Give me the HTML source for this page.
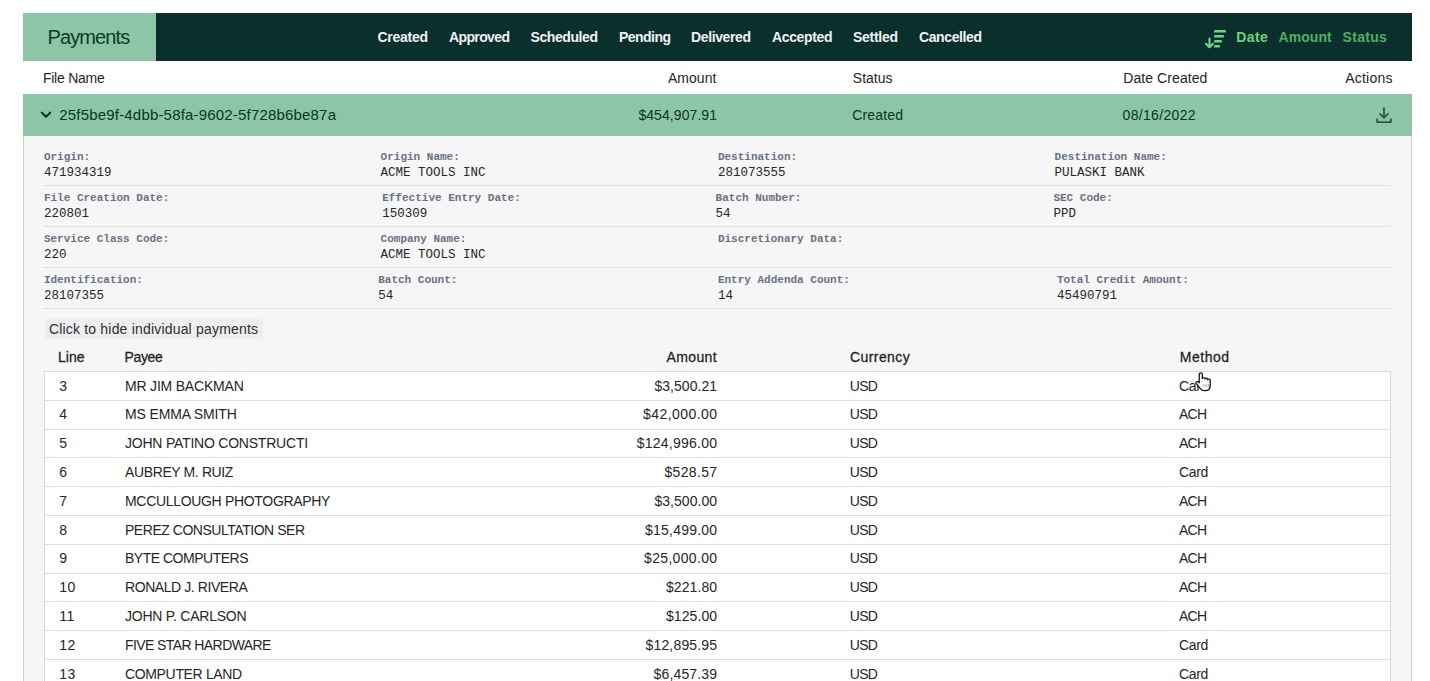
<!DOCTYPE html>
<html><head><meta charset="utf-8">
<style>
html,body{margin:0;padding:0;background:#fff;}
body{width:1430px;height:681px;overflow:hidden;position:relative;font-family:"Liberation Sans",sans-serif;}
.t{position:absolute;white-space:pre;}
.r{position:absolute;}
</style></head><body>
<div class="r" style="left:23px;top:13px;width:1389px;height:48px;background:#0b2f2d;"></div>
<div class="r" style="left:23px;top:13px;width:133px;height:48px;background:#8dc6a7;"></div>
<div class="t" style="left:47.60px;top:25.80px;font-size:20px;line-height:22px;font-family:'Liberation Sans', sans-serif;font-weight:400;color:#0a3b24;letter-spacing:-0.907px;">Payments</div>
<div class="t" style="left:377.50px;top:29.40px;font-size:14px;line-height:16px;font-family:'Liberation Sans', sans-serif;font-weight:700;color:#eef3f2;letter-spacing:-0.258px;">Created</div>
<div class="t" style="left:449.00px;top:29.40px;font-size:14px;line-height:16px;font-family:'Liberation Sans', sans-serif;font-weight:700;color:#eef3f2;letter-spacing:-0.621px;">Approved</div>
<div class="t" style="left:530.50px;top:29.40px;font-size:14px;line-height:16px;font-family:'Liberation Sans', sans-serif;font-weight:700;color:#eef3f2;letter-spacing:-0.412px;">Scheduled</div>
<div class="t" style="left:619.00px;top:29.40px;font-size:14px;line-height:16px;font-family:'Liberation Sans', sans-serif;font-weight:700;color:#eef3f2;letter-spacing:-0.533px;">Pending</div>
<div class="t" style="left:691.00px;top:29.40px;font-size:14px;line-height:16px;font-family:'Liberation Sans', sans-serif;font-weight:700;color:#eef3f2;letter-spacing:-0.381px;">Delivered</div>
<div class="t" style="left:772.00px;top:29.40px;font-size:14px;line-height:16px;font-family:'Liberation Sans', sans-serif;font-weight:700;color:#eef3f2;letter-spacing:-0.357px;">Accepted</div>
<div class="t" style="left:853.00px;top:29.40px;font-size:14px;line-height:16px;font-family:'Liberation Sans', sans-serif;font-weight:700;color:#eef3f2;letter-spacing:-0.283px;">Settled</div>
<div class="t" style="left:919.00px;top:29.40px;font-size:14px;line-height:16px;font-family:'Liberation Sans', sans-serif;font-weight:700;color:#eef3f2;letter-spacing:-0.394px;">Cancelled</div>
<svg class="r" style="left:1203px;top:27px" width="26" height="24" viewBox="0 0 26 24">
<g fill="#6fd47e">
<rect x="11" y="3" width="12" height="2.6" rx="1.2"/>
<rect x="11" y="8" width="10" height="2.6" rx="1.2"/>
<rect x="11" y="13" width="8" height="2.6" rx="1.2"/>
<rect x="11" y="18" width="6" height="2.6" rx="1.2"/>
</g>
<path d="M6.5 11.5 V20 M3 16.8 L6.5 20.2 L10 16.8" stroke="#6fd47e" stroke-width="2.2" fill="none" stroke-linecap="round" stroke-linejoin="round"/>
</svg>
<div class="t" style="left:1236.30px;top:29.30px;font-size:14px;line-height:16px;font-family:'Liberation Sans', sans-serif;font-weight:700;color:#6bd47b;letter-spacing:0.350px;">Date</div>
<div class="t" style="left:1278.50px;top:29.30px;font-size:14px;line-height:16px;font-family:'Liberation Sans', sans-serif;font-weight:700;color:#50ae60;letter-spacing:0.080px;">Amount</div>
<div class="t" style="left:1342.60px;top:29.30px;font-size:14px;line-height:16px;font-family:'Liberation Sans', sans-serif;font-weight:700;color:#50ae60;letter-spacing:0.300px;">Status</div>
<div class="t" style="left:42.90px;top:70.30px;font-size:14px;line-height:16px;font-family:'Liberation Sans', sans-serif;font-weight:400;color:#262626;letter-spacing:-0.237px;">File Name</div>
<div class="t" style="left:667.90px;top:70.30px;font-size:14px;line-height:16px;font-family:'Liberation Sans', sans-serif;font-weight:400;color:#262626;letter-spacing:0.050px;">Amount</div>
<div class="t" style="left:852.80px;top:70.30px;font-size:14px;line-height:16px;font-family:'Liberation Sans', sans-serif;font-weight:400;color:#262626;">Status</div>
<div class="t" style="left:1123.20px;top:70.30px;font-size:14px;line-height:16px;font-family:'Liberation Sans', sans-serif;font-weight:400;color:#262626;letter-spacing:0.086px;">Date Created</div>
<div class="t" style="left:1345.30px;top:70.30px;font-size:14px;line-height:16px;font-family:'Liberation Sans', sans-serif;font-weight:400;color:#262626;letter-spacing:0.200px;">Actions</div>
<div class="r" style="left:23px;top:135px;width:1389px;height:546px;background:#f6f6f6;border-left:1px solid #c0d9cc;border-right:1px solid #c0d9cc;box-sizing:border-box;"></div>
<div class="r" style="left:23px;top:94px;width:1389px;height:41.5px;background:#8dc6a7;"></div>
<svg class="r" style="left:39px;top:109px" width="14" height="11" viewBox="0 0 14 11">
<path d="M2.8 3.6 L7 7.8 L11.2 3.6" stroke="#0b2a1e" stroke-width="2" fill="none" stroke-linecap="round" stroke-linejoin="round"/>
</svg>
<div class="t" style="left:59.30px;top:106.20px;font-size:15px;line-height:17px;font-family:'Liberation Sans', sans-serif;font-weight:400;color:#083620;letter-spacing:0.184px;">25f5be9f-4dbb-58fa-9602-5f728b6be87a</div>
<div class="t" style="left:638.40px;top:107.20px;font-size:14px;line-height:16px;font-family:'Liberation Sans', sans-serif;font-weight:400;color:#083620;letter-spacing:0.075px;">$454,907.91</div>
<div class="t" style="left:852.30px;top:107.20px;font-size:14px;line-height:16px;font-family:'Liberation Sans', sans-serif;font-weight:400;color:#083620;letter-spacing:0.150px;">Created</div>
<div class="t" style="left:1122.60px;top:107.20px;font-size:14px;line-height:16px;font-family:'Liberation Sans', sans-serif;font-weight:400;color:#083620;letter-spacing:0.317px;">08/16/2022</div>
<svg class="r" style="left:1374px;top:105px" width="20" height="20" viewBox="0 0 20 20">
<path d="M10 3.2 V12.6 M6 8.8 L10 12.8 L14 8.8 M3.2 14.2 V17.1 H16.8 V14.2" stroke="#2a5843" stroke-width="1.85" fill="none" stroke-linecap="round" stroke-linejoin="round"/>
</svg>
<div class="t" style="left:43.90px;top:151.20px;font-size:11px;line-height:12px;font-family:'Liberation Mono', monospace;font-weight:700;color:#687283;">Origin:</div>
<div class="t" style="left:43.90px;top:165.80px;font-size:12.5px;line-height:14px;font-family:'Liberation Mono', monospace;font-weight:400;color:#262626;">471934319</div>
<div class="t" style="left:380.60px;top:151.20px;font-size:11px;line-height:12px;font-family:'Liberation Mono', monospace;font-weight:700;color:#687283;">Origin Name:</div>
<div class="t" style="left:380.60px;top:165.80px;font-size:12.5px;line-height:14px;font-family:'Liberation Mono', monospace;font-weight:400;color:#262626;">ACME TOOLS INC</div>
<div class="t" style="left:717.90px;top:151.20px;font-size:11px;line-height:12px;font-family:'Liberation Mono', monospace;font-weight:700;color:#687283;">Destination:</div>
<div class="t" style="left:717.90px;top:165.80px;font-size:12.5px;line-height:14px;font-family:'Liberation Mono', monospace;font-weight:400;color:#262626;">281073555</div>
<div class="t" style="left:1054.60px;top:151.20px;font-size:11px;line-height:12px;font-family:'Liberation Mono', monospace;font-weight:700;color:#687283;">Destination Name:</div>
<div class="t" style="left:1054.60px;top:165.80px;font-size:12.5px;line-height:14px;font-family:'Liberation Mono', monospace;font-weight:400;color:#262626;">PULASKI BANK</div>
<div class="r" style="left:43px;top:185px;width:1348px;height:1px;background:#e2e2e2;"></div>
<div class="t" style="left:43.90px;top:192.20px;font-size:11px;line-height:12px;font-family:'Liberation Mono', monospace;font-weight:700;color:#687283;">File Creation Date:</div>
<div class="t" style="left:43.90px;top:206.80px;font-size:12.5px;line-height:14px;font-family:'Liberation Mono', monospace;font-weight:400;color:#262626;">220801</div>
<div class="t" style="left:382.20px;top:192.20px;font-size:11px;line-height:12px;font-family:'Liberation Mono', monospace;font-weight:700;color:#687283;">Effective Entry Date:</div>
<div class="t" style="left:382.20px;top:206.80px;font-size:12.5px;line-height:14px;font-family:'Liberation Mono', monospace;font-weight:400;color:#262626;">150309</div>
<div class="t" style="left:715.60px;top:192.20px;font-size:11px;line-height:12px;font-family:'Liberation Mono', monospace;font-weight:700;color:#687283;">Batch Number:</div>
<div class="t" style="left:715.60px;top:206.80px;font-size:12.5px;line-height:14px;font-family:'Liberation Mono', monospace;font-weight:400;color:#262626;">54</div>
<div class="t" style="left:1053.40px;top:192.20px;font-size:11px;line-height:12px;font-family:'Liberation Mono', monospace;font-weight:700;color:#687283;">SEC Code:</div>
<div class="t" style="left:1053.40px;top:206.80px;font-size:12.5px;line-height:14px;font-family:'Liberation Mono', monospace;font-weight:400;color:#262626;">PPD</div>
<div class="r" style="left:43px;top:226px;width:1348px;height:1px;background:#e2e2e2;"></div>
<div class="t" style="left:43.90px;top:233.20px;font-size:11px;line-height:12px;font-family:'Liberation Mono', monospace;font-weight:700;color:#687283;">Service Class Code:</div>
<div class="t" style="left:43.90px;top:247.80px;font-size:12.5px;line-height:14px;font-family:'Liberation Mono', monospace;font-weight:400;color:#262626;">220</div>
<div class="t" style="left:380.60px;top:233.20px;font-size:11px;line-height:12px;font-family:'Liberation Mono', monospace;font-weight:700;color:#687283;">Company Name:</div>
<div class="t" style="left:380.60px;top:247.80px;font-size:12.5px;line-height:14px;font-family:'Liberation Mono', monospace;font-weight:400;color:#262626;">ACME TOOLS INC</div>
<div class="t" style="left:717.90px;top:233.20px;font-size:11px;line-height:12px;font-family:'Liberation Mono', monospace;font-weight:700;color:#687283;">Discretionary Data:</div>
<div class="r" style="left:43px;top:267px;width:1348px;height:1px;background:#e2e2e2;"></div>
<div class="t" style="left:43.90px;top:274.20px;font-size:11px;line-height:12px;font-family:'Liberation Mono', monospace;font-weight:700;color:#687283;">Identification:</div>
<div class="t" style="left:43.90px;top:288.80px;font-size:12.5px;line-height:14px;font-family:'Liberation Mono', monospace;font-weight:400;color:#262626;">28107355</div>
<div class="t" style="left:378.20px;top:274.20px;font-size:11px;line-height:12px;font-family:'Liberation Mono', monospace;font-weight:700;color:#687283;">Batch Count:</div>
<div class="t" style="left:378.20px;top:288.80px;font-size:12.5px;line-height:14px;font-family:'Liberation Mono', monospace;font-weight:400;color:#262626;">54</div>
<div class="t" style="left:717.90px;top:274.20px;font-size:11px;line-height:12px;font-family:'Liberation Mono', monospace;font-weight:700;color:#687283;">Entry Addenda Count:</div>
<div class="t" style="left:717.90px;top:288.80px;font-size:12.5px;line-height:14px;font-family:'Liberation Mono', monospace;font-weight:400;color:#262626;">14</div>
<div class="t" style="left:1056.90px;top:274.20px;font-size:11px;line-height:12px;font-family:'Liberation Mono', monospace;font-weight:700;color:#687283;">Total Credit Amount:</div>
<div class="t" style="left:1056.90px;top:288.80px;font-size:12.5px;line-height:14px;font-family:'Liberation Mono', monospace;font-weight:400;color:#262626;">45490791</div>
<div class="r" style="left:43px;top:308px;width:1348px;height:1px;background:#e2e2e2;"></div>
<div class="r" style="left:45px;top:318.5px;width:217.5px;height:20.0px;background:#eeeeee;border-radius:3px;"></div>
<div class="t" style="left:48.90px;top:321.20px;font-size:14px;line-height:16px;font-family:'Liberation Sans', sans-serif;font-weight:400;color:#2e2e2e;letter-spacing:0.188px;">Click to hide individual payments</div>
<div class="t" style="left:58.00px;top:349.20px;font-size:14px;line-height:16px;font-family:'Liberation Sans', sans-serif;font-weight:400;color:#1f1f1f;letter-spacing:0.017px;-webkit-text-stroke:0.28px #1f1f1f;">Line</div>
<div class="t" style="left:124.40px;top:349.20px;font-size:14px;line-height:16px;font-family:'Liberation Sans', sans-serif;font-weight:400;color:#1f1f1f;letter-spacing:-0.300px;-webkit-text-stroke:0.28px #1f1f1f;">Payee</div>
<div class="t" style="left:666.50px;top:349.20px;font-size:14px;line-height:16px;font-family:'Liberation Sans', sans-serif;font-weight:400;color:#1f1f1f;letter-spacing:0.370px;-webkit-text-stroke:0.28px #1f1f1f;">Amount</div>
<div class="t" style="left:850.00px;top:349.20px;font-size:14px;line-height:16px;font-family:'Liberation Sans', sans-serif;font-weight:400;color:#1f1f1f;letter-spacing:0.414px;-webkit-text-stroke:0.28px #1f1f1f;">Currency</div>
<div class="t" style="left:1179.80px;top:349.20px;font-size:14px;line-height:16px;font-family:'Liberation Sans', sans-serif;font-weight:400;color:#1f1f1f;letter-spacing:0.500px;-webkit-text-stroke:0.28px #1f1f1f;">Method</div>
<div class="r" style="left:44px;top:371px;width:1347px;height:329px;background:#ffffff;border:1px solid #d9dadd;box-sizing:border-box;"></div>
<div class="r" style="left:44px;top:399.8px;width:1347px;height:1.0px;background:#dcdee1;"></div>
<div class="t" style="left:59.20px;top:377.60px;font-size:14px;line-height:16px;font-family:'Liberation Sans', sans-serif;font-weight:400;color:#262626;">3</div>
<div class="t" style="left:125.00px;top:377.60px;font-size:14px;line-height:16px;font-family:'Liberation Sans', sans-serif;font-weight:400;color:#262626;letter-spacing:-0.196px;">MR JIM BACKMAN</div>
<div class="t" style="left:654.40px;top:377.60px;font-size:14px;line-height:16px;font-family:'Liberation Sans', sans-serif;font-weight:400;color:#262626;letter-spacing:0.050px;">$3,500.21</div>
<div class="t" style="left:849.80px;top:377.60px;font-size:14px;line-height:16px;font-family:'Liberation Sans', sans-serif;font-weight:400;color:#262626;letter-spacing:-0.775px;">USD</div>
<div class="t" style="left:1179.00px;top:377.60px;font-size:14px;line-height:16px;font-family:'Liberation Sans', sans-serif;font-weight:400;color:#262626;letter-spacing:-0.317px;">Card</div>
<div class="r" style="left:44px;top:428.6px;width:1347px;height:1.0px;background:#dcdee1;"></div>
<div class="t" style="left:59.20px;top:406.40px;font-size:14px;line-height:16px;font-family:'Liberation Sans', sans-serif;font-weight:400;color:#262626;">4</div>
<div class="t" style="left:125.00px;top:406.40px;font-size:14px;line-height:16px;font-family:'Liberation Sans', sans-serif;font-weight:400;color:#262626;letter-spacing:-0.146px;">MS EMMA SMITH</div>
<div class="t" style="left:642.90px;top:406.40px;font-size:14px;line-height:16px;font-family:'Liberation Sans', sans-serif;font-weight:400;color:#262626;letter-spacing:0.461px;">$42,000.00</div>
<div class="t" style="left:849.80px;top:406.40px;font-size:14px;line-height:16px;font-family:'Liberation Sans', sans-serif;font-weight:400;color:#262626;letter-spacing:-0.775px;">USD</div>
<div class="t" style="left:1179.00px;top:406.40px;font-size:14px;line-height:16px;font-family:'Liberation Sans', sans-serif;font-weight:400;color:#262626;letter-spacing:-0.775px;">ACH</div>
<div class="r" style="left:44px;top:457.4px;width:1347px;height:1.0px;background:#dcdee1;"></div>
<div class="t" style="left:59.20px;top:435.20px;font-size:14px;line-height:16px;font-family:'Liberation Sans', sans-serif;font-weight:400;color:#262626;">5</div>
<div class="t" style="left:125.00px;top:435.20px;font-size:14px;line-height:16px;font-family:'Liberation Sans', sans-serif;font-weight:400;color:#262626;letter-spacing:-0.219px;">JOHN PATINO CONSTRUCTI</div>
<div class="t" style="left:636.70px;top:435.20px;font-size:14px;line-height:16px;font-family:'Liberation Sans', sans-serif;font-weight:400;color:#262626;letter-spacing:0.255px;">$124,996.00</div>
<div class="t" style="left:849.80px;top:435.20px;font-size:14px;line-height:16px;font-family:'Liberation Sans', sans-serif;font-weight:400;color:#262626;letter-spacing:-0.775px;">USD</div>
<div class="t" style="left:1179.00px;top:435.20px;font-size:14px;line-height:16px;font-family:'Liberation Sans', sans-serif;font-weight:400;color:#262626;letter-spacing:-0.775px;">ACH</div>
<div class="r" style="left:44px;top:486.2px;width:1347px;height:1.0px;background:#dcdee1;"></div>
<div class="t" style="left:59.20px;top:464.00px;font-size:14px;line-height:16px;font-family:'Liberation Sans', sans-serif;font-weight:400;color:#262626;">6</div>
<div class="t" style="left:125.00px;top:464.00px;font-size:14px;line-height:16px;font-family:'Liberation Sans', sans-serif;font-weight:400;color:#262626;letter-spacing:-0.377px;">AUBREY M. RUIZ</div>
<div class="t" style="left:664.40px;top:464.00px;font-size:14px;line-height:16px;font-family:'Liberation Sans', sans-serif;font-weight:400;color:#262626;letter-spacing:0.350px;">$528.57</div>
<div class="t" style="left:849.80px;top:464.00px;font-size:14px;line-height:16px;font-family:'Liberation Sans', sans-serif;font-weight:400;color:#262626;letter-spacing:-0.775px;">USD</div>
<div class="t" style="left:1179.00px;top:464.00px;font-size:14px;line-height:16px;font-family:'Liberation Sans', sans-serif;font-weight:400;color:#262626;letter-spacing:-0.317px;">Card</div>
<div class="r" style="left:44px;top:515.0px;width:1347px;height:1.0px;background:#dcdee1;"></div>
<div class="t" style="left:59.20px;top:492.80px;font-size:14px;line-height:16px;font-family:'Liberation Sans', sans-serif;font-weight:400;color:#262626;">7</div>
<div class="t" style="left:125.00px;top:492.80px;font-size:14px;line-height:16px;font-family:'Liberation Sans', sans-serif;font-weight:400;color:#262626;letter-spacing:-0.319px;">MCCULLOUGH PHOTOGRAPHY</div>
<div class="t" style="left:654.40px;top:492.80px;font-size:14px;line-height:16px;font-family:'Liberation Sans', sans-serif;font-weight:400;color:#262626;letter-spacing:0.050px;">$3,500.00</div>
<div class="t" style="left:849.80px;top:492.80px;font-size:14px;line-height:16px;font-family:'Liberation Sans', sans-serif;font-weight:400;color:#262626;letter-spacing:-0.775px;">USD</div>
<div class="t" style="left:1179.00px;top:492.80px;font-size:14px;line-height:16px;font-family:'Liberation Sans', sans-serif;font-weight:400;color:#262626;letter-spacing:-0.775px;">ACH</div>
<div class="r" style="left:44px;top:543.8px;width:1347px;height:1.0px;background:#dcdee1;"></div>
<div class="t" style="left:59.20px;top:521.60px;font-size:14px;line-height:16px;font-family:'Liberation Sans', sans-serif;font-weight:400;color:#262626;">8</div>
<div class="t" style="left:125.00px;top:521.60px;font-size:14px;line-height:16px;font-family:'Liberation Sans', sans-serif;font-weight:400;color:#262626;letter-spacing:-0.467px;">PEREZ CONSULTATION SER</div>
<div class="t" style="left:645.00px;top:521.60px;font-size:14px;line-height:16px;font-family:'Liberation Sans', sans-serif;font-weight:400;color:#262626;letter-spacing:0.228px;">$15,499.00</div>
<div class="t" style="left:849.80px;top:521.60px;font-size:14px;line-height:16px;font-family:'Liberation Sans', sans-serif;font-weight:400;color:#262626;letter-spacing:-0.775px;">USD</div>
<div class="t" style="left:1179.00px;top:521.60px;font-size:14px;line-height:16px;font-family:'Liberation Sans', sans-serif;font-weight:400;color:#262626;letter-spacing:-0.775px;">ACH</div>
<div class="r" style="left:44px;top:572.6px;width:1347px;height:1.0px;background:#dcdee1;"></div>
<div class="t" style="left:59.20px;top:550.40px;font-size:14px;line-height:16px;font-family:'Liberation Sans', sans-serif;font-weight:400;color:#262626;">9</div>
<div class="t" style="left:125.00px;top:550.40px;font-size:14px;line-height:16px;font-family:'Liberation Sans', sans-serif;font-weight:400;color:#262626;letter-spacing:-0.492px;">BYTE COMPUTERS</div>
<div class="t" style="left:644.00px;top:550.40px;font-size:14px;line-height:16px;font-family:'Liberation Sans', sans-serif;font-weight:400;color:#262626;letter-spacing:0.339px;">$25,000.00</div>
<div class="t" style="left:849.80px;top:550.40px;font-size:14px;line-height:16px;font-family:'Liberation Sans', sans-serif;font-weight:400;color:#262626;letter-spacing:-0.775px;">USD</div>
<div class="t" style="left:1179.00px;top:550.40px;font-size:14px;line-height:16px;font-family:'Liberation Sans', sans-serif;font-weight:400;color:#262626;letter-spacing:-0.775px;">ACH</div>
<div class="r" style="left:44px;top:601.4px;width:1347px;height:1.0px;background:#dcdee1;"></div>
<div class="t" style="left:59.20px;top:579.20px;font-size:14px;line-height:16px;font-family:'Liberation Sans', sans-serif;font-weight:400;color:#262626;letter-spacing:0.622px;">10</div>
<div class="t" style="left:125.00px;top:579.20px;font-size:14px;line-height:16px;font-family:'Liberation Sans', sans-serif;font-weight:400;color:#262626;letter-spacing:-0.423px;">RONALD J. RIVERA</div>
<div class="t" style="left:666.00px;top:579.20px;font-size:14px;line-height:16px;font-family:'Liberation Sans', sans-serif;font-weight:400;color:#262626;letter-spacing:0.083px;">$221.80</div>
<div class="t" style="left:849.80px;top:579.20px;font-size:14px;line-height:16px;font-family:'Liberation Sans', sans-serif;font-weight:400;color:#262626;letter-spacing:-0.775px;">USD</div>
<div class="t" style="left:1179.00px;top:579.20px;font-size:14px;line-height:16px;font-family:'Liberation Sans', sans-serif;font-weight:400;color:#262626;letter-spacing:-0.775px;">ACH</div>
<div class="r" style="left:44px;top:630.2px;width:1347px;height:1.0px;background:#dcdee1;"></div>
<div class="t" style="left:59.20px;top:608.00px;font-size:14px;line-height:16px;font-family:'Liberation Sans', sans-serif;font-weight:400;color:#262626;letter-spacing:0.582px;">11</div>
<div class="t" style="left:125.00px;top:608.00px;font-size:14px;line-height:16px;font-family:'Liberation Sans', sans-serif;font-weight:400;color:#262626;letter-spacing:-0.243px;">JOHN P. CARLSON</div>
<div class="t" style="left:666.00px;top:608.00px;font-size:14px;line-height:16px;font-family:'Liberation Sans', sans-serif;font-weight:400;color:#262626;letter-spacing:0.083px;">$125.00</div>
<div class="t" style="left:849.80px;top:608.00px;font-size:14px;line-height:16px;font-family:'Liberation Sans', sans-serif;font-weight:400;color:#262626;letter-spacing:-0.775px;">USD</div>
<div class="t" style="left:1179.00px;top:608.00px;font-size:14px;line-height:16px;font-family:'Liberation Sans', sans-serif;font-weight:400;color:#262626;letter-spacing:-0.775px;">ACH</div>
<div class="r" style="left:44px;top:659.0px;width:1347px;height:1.0px;background:#dcdee1;"></div>
<div class="t" style="left:59.20px;top:636.80px;font-size:14px;line-height:16px;font-family:'Liberation Sans', sans-serif;font-weight:400;color:#262626;letter-spacing:0.622px;">12</div>
<div class="t" style="left:125.00px;top:636.80px;font-size:14px;line-height:16px;font-family:'Liberation Sans', sans-serif;font-weight:400;color:#262626;letter-spacing:-0.585px;">FIVE STAR HARDWARE</div>
<div class="t" style="left:645.50px;top:636.80px;font-size:14px;line-height:16px;font-family:'Liberation Sans', sans-serif;font-weight:400;color:#262626;letter-spacing:0.172px;">$12,895.95</div>
<div class="t" style="left:849.80px;top:636.80px;font-size:14px;line-height:16px;font-family:'Liberation Sans', sans-serif;font-weight:400;color:#262626;letter-spacing:-0.775px;">USD</div>
<div class="t" style="left:1179.00px;top:636.80px;font-size:14px;line-height:16px;font-family:'Liberation Sans', sans-serif;font-weight:400;color:#262626;letter-spacing:-0.317px;">Card</div>
<div class="t" style="left:59.20px;top:665.60px;font-size:14px;line-height:16px;font-family:'Liberation Sans', sans-serif;font-weight:400;color:#262626;letter-spacing:0.622px;">13</div>
<div class="t" style="left:125.00px;top:665.60px;font-size:14px;line-height:16px;font-family:'Liberation Sans', sans-serif;font-weight:400;color:#262626;letter-spacing:-0.346px;">COMPUTER LAND</div>
<div class="t" style="left:653.50px;top:665.60px;font-size:14px;line-height:16px;font-family:'Liberation Sans', sans-serif;font-weight:400;color:#262626;letter-spacing:0.163px;">$6,457.39</div>
<div class="t" style="left:849.80px;top:665.60px;font-size:14px;line-height:16px;font-family:'Liberation Sans', sans-serif;font-weight:400;color:#262626;letter-spacing:-0.775px;">USD</div>
<div class="t" style="left:1179.00px;top:665.60px;font-size:14px;line-height:16px;font-family:'Liberation Sans', sans-serif;font-weight:400;color:#262626;letter-spacing:-0.317px;">Card</div>
<svg class="r" style="left:1193px;top:371px" width="22" height="22" viewBox="0 0 22 22">
<g transform="translate(0.5,0) scale(1.1,1)"><path d="M5.2 9.5 V3.2 C5.2 1.4 8 1.4 8 3.2 V7.4 C8 6.2 10.4 6.2 10.4 7.4 V8 C10.4 6.9 12.8 6.9 12.8 8.2 V8.8 C12.8 7.8 15.2 7.8 15.2 9.2 V14.2 C15.2 17.2 13.6 19.6 10.8 19.6 H9.6 C8 19.6 7 18.8 6 17.4 L2.4 12.4 C1.6 11.3 3 10 4 10.8 L5.2 11.9 Z" fill="#fff" stroke="#151515" stroke-width="1.2" stroke-linejoin="round"/>
<path d="M9.4 13 V16 M11.4 13 V16 M13.4 13 V16" stroke="#888" stroke-width="0.7"/></g>
</svg>
</body></html>
